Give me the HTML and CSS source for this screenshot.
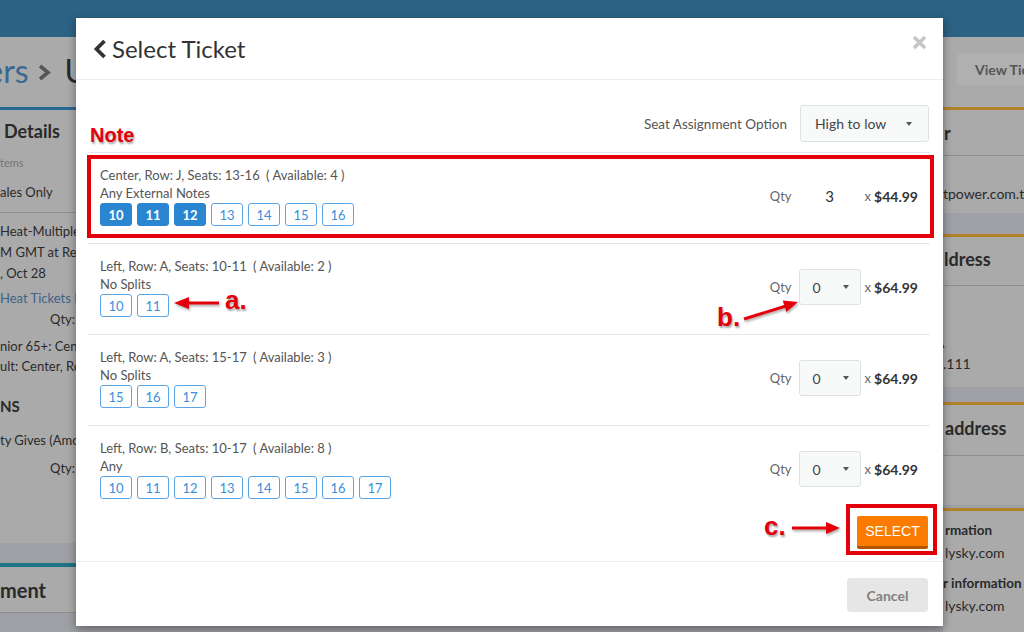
FILE: index.html
```html
<!DOCTYPE html>
<html>
<head>
  <title>Select Ticket</title>
  <link rel="stylesheet" href="styles.css">
</head>
<body>
  <div id="page">
    <div class="topbar"></div>

    <div class="page-head">
      <div class="crumbs">
        <span class="crumb-link">Orders</span>
        <svg class="crumb-sep" width="13" height="17" viewBox="0 0 13 17"><polyline points="2,2 10,8.5 2,15" fill="none" stroke="#7a7a7a" stroke-width="3.6"/></svg>
        <span class="crumb-current">Update Order</span>
      </div>
      <button class="btn-view">View Tickets</button>
    </div>

    <div class="columns">
      <div class="col-left">
        <div class="panel panel-order">
          <h3 class="panel-title">Details</h3>
          <div class="muted">tems</div>
          <div class="plain">ales Only</div>
          <div class="divider"></div>
          <div class="event">
            <div>Heat-Multiple Events</div>
            <div>M GMT at Regions Arena</div>
            <div>, Oct 28</div>
          </div>
          <div class="event-link">Heat Tickets For Sale</div>
          <div class="qty-line">Qty: 2</div>
          <div class="tix">
            <div>nior 65+: Center, Row J</div>
            <div>ult: Center, Row J</div>
          </div>
          <div class="sub-title">NS</div>
          <div class="plain gives">ty Gives (Amount)</div>
          <div class="qty-line qty-last">Qty: 1</div>
        </div>
        <div class="panel panel-pay">
          <h3 class="panel-title">ment</h3>
        </div>
      </div>

      <div class="col-right">
        <div class="panel panel-side side-a">
          <h3 class="side-title">r</h3>
          <div class="side-body">
            <div class="side-text first">tpower.com.tw</div>
          </div>
        </div>
        <div class="panel panel-side side-b">
          <h3 class="side-title">ldress</h3>
          <div class="side-body">
            <div class="side-text usa">A</div>
            <div class="side-text">.111</div>
          </div>
        </div>
        <div class="panel panel-side side-c">
          <h3 class="side-title">address</h3>
        </div>
        <div class="panel panel-side side-d">
          <div class="side-strong">rmation</div>
          <div class="side-text">lysky.com</div>
          <div class="side-strong second">r information</div>
          <div class="side-text">lysky.com</div>
        </div>
      </div>
    </div>
  </div>

  <div class="backdrop"></div>

  <div class="modal">
    <div class="modal-header">
      <h4 class="modal-title">
        <svg class="back-icon" width="14" height="20" viewBox="0 0 14 20"><polyline points="11.5,2 3.5,10 11.5,18" fill="none" stroke="#333" stroke-width="3.8"/></svg>
        <span>Select Ticket</span>
      </h4>
      <svg class="close-icon" width="15" height="15" viewBox="0 0 15 15"><path d="M2 2 L13 13 M13 2 L2 13" stroke="#c6c6c6" stroke-width="3.6"/></svg>
    </div>

    <div class="modal-body">
      <div class="toolbar">
        <span class="toolbar-label">Seat Assignment Option</span>
        <div class="dropdown wide"><span>High to low</span><i class="caret"></i></div>
      </div>

      <div class="rows">
        <div class="row">
          <div class="info">
            <div class="row-title">Center, Row: J, Seats: 13-16 <span class="avail">( Available: 4 )</span></div>
            <div class="row-note">Any External Notes</div>
            <div class="seats">
              <span class="seat on">10</span><span class="seat on">11</span><span class="seat on">12</span><span class="seat">13</span><span class="seat">14</span><span class="seat">15</span><span class="seat">16</span>
            </div>
          </div>
          <div class="qty">
            <span class="qty-label">Qty</span>
            <span class="qty-value">3</span>
            <span class="times">x</span><span class="price">$44.99</span>
          </div>
        </div>

        <div class="row">
          <div class="info">
            <div class="row-title">Left, Row: A, Seats: 10-11 <span class="avail">( Available: 2 )</span></div>
            <div class="row-note">No Splits</div>
            <div class="seats">
              <span class="seat">10</span><span class="seat">11</span>
            </div>
          </div>
          <div class="qty">
            <span class="qty-label">Qty</span>
            <div class="dropdown small"><span>0</span><i class="caret"></i></div>
            <span class="times">x</span><span class="price">$64.99</span>
          </div>
        </div>

        <div class="row">
          <div class="info">
            <div class="row-title">Left, Row: A, Seats: 15-17 <span class="avail">( Available: 3 )</span></div>
            <div class="row-note">No Splits</div>
            <div class="seats">
              <span class="seat">15</span><span class="seat">16</span><span class="seat">17</span>
            </div>
          </div>
          <div class="qty">
            <span class="qty-label">Qty</span>
            <div class="dropdown small"><span>0</span><i class="caret"></i></div>
            <span class="times">x</span><span class="price">$64.99</span>
          </div>
        </div>

        <div class="row">
          <div class="info">
            <div class="row-title">Left, Row: B, Seats: 10-17 <span class="avail">( Available: 8 )</span></div>
            <div class="row-note">Any</div>
            <div class="seats">
              <span class="seat">10</span><span class="seat">11</span><span class="seat">12</span><span class="seat">13</span><span class="seat">14</span><span class="seat">15</span><span class="seat">16</span><span class="seat">17</span>
            </div>
          </div>
          <div class="qty">
            <span class="qty-label">Qty</span>
            <div class="dropdown small"><span>0</span><i class="caret"></i></div>
            <span class="times">x</span><span class="price">$64.99</span>
          </div>
        </div>
      </div>

      <div class="actions">
        <button class="btn-select">SELECT</button>
      </div>
    </div>

    <div class="modal-footer">
      <button class="btn-cancel">Cancel</button>
    </div>
  </div>

  <!-- annotations drawn over the screenshot -->
  <div class="mark note-label">Note</div>
  <div class="mark-box box-row"></div>
  <div class="mark-box box-select"></div>
  <div class="mark letter letter-a">a.</div>
  <div class="mark letter letter-b">b.</div>
  <div class="mark letter letter-c">c.</div>
  <svg class="arrows" width="1024" height="632" viewBox="0 0 1024 632">
    <g fill="#e3000b" stroke="#e3000b">
      <line x1="219" y1="303" x2="186" y2="303" stroke-width="3"/>
      <polygon points="174,303 189,297 189,309" stroke="none"/>
      <line x1="744" y1="319" x2="786" y2="306" stroke-width="3"/>
      <polygon points="798,302 786.4,311.9 782.8,300.5" stroke="none"/>
      <line x1="792" y1="528" x2="828" y2="528" stroke-width="3"/>
      <polygon points="840,528 826,522 826,534" stroke="none"/>
    </g>
  </svg>
</body>
</html>
```

FILE: styles.css
```css
body {
  margin: 0;
  width: 1024px;
  height: 632px;
  overflow: hidden;
  position: relative;
  font-family: Lato, "Open Sans", Arial, sans-serif;
  background-color: #e3e6ec;
  color: #3c3c3c;
}
h3, h4 {
  margin: 0;
}
button {
  font-family: inherit;
  border: none;
  cursor: pointer;
}

/* page behind the modal */
.topbar {
  height: 37px;
  background-color: #3f8dbe;
}
.page-head {
  height: 70px;
  display: flex;
  align-items: center;
  justify-content: space-between;
  background-color: #f4f4f4;
  overflow: hidden;
}
.crumbs {
  display: flex;
  align-items: center;
  margin-left: -68px;
  margin-top: -4px;
  font-size: 32px;
  white-space: nowrap;
}
.crumb-link {
  color: #5296d2;
}
.crumb-sep {
  margin: 4px 14px 0 9px;
}
.crumb-current {
  color: #3c3c3c;
}
.btn-view {
  width: 90px;
  height: 31px;
  margin-right: -23px;
  margin-top: -6px;
  padding-left: 18px;
  text-align: left;
  font-size: 14px;
  font-weight: bold;
  color: #7a7a7a;
  background-color: #fdfdfd;
  border-radius: 3px;
  white-space: nowrap;
}
.columns {
  display: flex;
  justify-content: space-between;
}
.col-left {
  width: 300px;
}
.col-right {
  width: 81px;
}
.panel {
  background-color: #f4f4f4;
  box-sizing: border-box;
  white-space: nowrap;
}
.panel-order {
  height: 436px;
  border-top: 3px solid #3d95d4;
  font-size: 13px;
}
.panel-title {
  padding: 9px 0 7px 4px;
  font-size: 18px;
  line-height: 24px;
  color: #3c3c3c;
}
.muted {
  margin-top: 5px;
  font-size: 11px;
  line-height: 16px;
  color: #a8a8a8;
}
.plain {
  margin-top: 10px;
  line-height: 22px;
}
.divider {
  margin-top: 9px;
  border-top: 1px solid #cbcbcb;
}
.event {
  margin-top: 8px;
  line-height: 21px;
}
.event-link {
  margin-top: 4px;
  line-height: 21px;
  color: #5a8fc4;
}
.qty-line {
  padding-left: 50px;
  line-height: 20px;
}
.tix {
  margin-top: 7px;
  line-height: 20px;
}
.sub-title {
  margin-top: 18px;
  font-size: 15px;
  font-weight: bold;
  line-height: 24px;
}
.gives {
  margin-top: 12px;
  line-height: 20px;
}
.qty-last {
  margin-top: 8px;
}
.panel-pay {
  margin-top: 20px;
  height: 50px;
  border-top: 4px solid #2aa6bd;
  border-bottom: 1px solid #cbcbcb;
}
.panel-pay .panel-title {
  padding: 11px 0 0 0;
  font-size: 20px;
}

.panel-side {
  border-top: 3px solid #ffbb3c;
}
.side-title {
  padding: 11px 0 10px 1px;
  font-size: 18px;
  line-height: 24px;
  border-bottom: 1px solid #cbcbcb;
}
.side-text {
  font-size: 14px;
  line-height: 22px;
}
.side-a {
  height: 106px;
}
.side-a .side-text.first {
  padding-top: 27px;
}
.side-b {
  margin-top: 21px;
  height: 153px;
}
.side-b .side-title {
  padding: 10px 0 14px 1px;
}
.usa {
  margin: 47px 0 0 -8px;
  line-height: 20px;
}
.side-c {
  margin-top: 15px;
  height: 103px;
}
.side-c .side-title {
  padding: 11px 0 15px 2px;
}
.side-d {
  margin-top: 3px;
  height: 130px;
  padding-top: 8px;
}
.side-strong {
  font-size: 13.5px;
  font-weight: bold;
  line-height: 22px;
  padding-left: 2px;
}
.side-strong.second {
  margin-top: 8px;
  padding-left: 0;
}
.side-d .side-text {
  padding-left: 2px;
  margin-top: 1px;
}

.backdrop {
  position: absolute;
  inset: 0;
  background-color: rgba(0, 0, 0, 0.3);
}

/* modal */
.modal {
  position: absolute;
  left: 76px;
  top: 18px;
  width: 867px;
  background-color: #fff;
  box-shadow: 0 3px 9px rgba(0, 0, 0, 0.4);
}
.modal-header {
  height: 62px;
  box-sizing: border-box;
  padding: 0 16px 0 17px;
  display: flex;
  align-items: center;
  justify-content: space-between;
  border-bottom: 1px solid #ebebeb;
}
.modal-title {
  display: flex;
  align-items: center;
  font-size: 24px;
  font-weight: normal;
  color: #333;
}
.back-icon {
  margin-right: 5px;
}
.close-icon {
  align-self: flex-start;
  margin-top: 17px;
}
.modal-body {
  padding: 0 13px 0 12px;
}
.toolbar {
  display: flex;
  justify-content: flex-end;
  align-items: center;
  padding: 25px 1px 10px 0;
}
.toolbar-label {
  font-size: 13.5px;
  color: #555;
  margin-right: 13px;
}
.dropdown {
  display: flex;
  align-items: center;
  justify-content: space-between;
  box-sizing: border-box;
  background-color: #f8fafa;
  border: 1px solid #dfe2e2;
  border-radius: 3px;
  font-size: 14px;
  color: #444;
}
.dropdown.wide {
  width: 129px;
  height: 37px;
  padding: 0 16px 0 14px;
}
.dropdown.small {
  width: 62px;
  height: 36px;
  padding: 0 11px 0 13px;
}
.caret {
  width: 0;
  height: 0;
  border-top: 4px solid #555;
  border-left: 3.5px solid transparent;
  border-right: 3.5px solid transparent;
}
.rows {
  border-top: 1px solid #e6e6e6;
}
.row {
  display: flex;
  justify-content: space-between;
  align-items: center;
  padding: 13px 12px 17px;
  border-bottom: 1px solid #e6e6e6;
}
.row:last-child {
  border-bottom: none;
}
.row-title,
.row-note {
  font-size: 13px;
  line-height: 18px;
  color: #555;
}
.avail {
  margin-left: 3px;
}
.seats {
  display: flex;
  margin-top: 1px;
}
.seat {
  width: 32px;
  height: 23px;
  box-sizing: border-box;
  margin-right: 5px;
  display: flex;
  align-items: center;
  justify-content: center;
  border: 1px solid #5aa5e6;
  border-radius: 3px;
  font-size: 13px;
  color: #3b8fd9;
  background-color: #fff;
}
.seat.on {
  background-color: #2a86d1;
  border-color: #2a86d1;
  color: #fff;
  font-weight: bold;
}
.qty {
  display: flex;
  align-items: center;
}
.qty-label {
  font-size: 13px;
  color: #666;
  margin-right: 7px;
}
.qty-value {
  width: 62px;
  text-align: center;
  font-size: 15px;
  color: #333;
}
.times {
  font-size: 13px;
  color: #666;
  margin: 0 3px 0 4px;
}
.price {
  font-size: 14px;
  font-weight: bold;
  color: #333;
}
.actions {
  display: flex;
  justify-content: flex-end;
  padding: 0 2px 12px 0;
}
.btn-select {
  width: 71px;
  height: 33px;
  box-sizing: border-box;
  background-color: #fb7a00;
  border-bottom: 3px solid #b35400;
  border-radius: 2px;
  color: #fff;
  font-family: "Liberation Sans", Arial, sans-serif;
  font-size: 14px;
  padding: 0;
}
.modal-footer {
  display: flex;
  justify-content: flex-end;
  padding: 16px 15px 14px;
  border-top: 1px solid #ededed;
}
.btn-cancel {
  width: 81px;
  height: 34px;
  background-color: #e6e6e6;
  border-radius: 4px;
  color: #808080;
  font-size: 14px;
  font-weight: bold;
}

/* red annotations */
.mark {
  position: absolute;
  font-family: "Liberation Sans", Arial, sans-serif;
  font-weight: bold;
  color: #e3000b;
  text-shadow: 1px 2px 2px rgba(0, 0, 0, 0.35);
}
.note-label {
  left: 90px;
  top: 125px;
  font-size: 20px;
  line-height: 20px;
}
.letter {
  font-size: 26px;
  line-height: 26px;
}
.letter-a {
  left: 225px;
  top: 287px;
}
.letter-b {
  left: 717px;
  top: 304px;
}
.letter-c {
  left: 764px;
  top: 513px;
}
.mark-box {
  position: absolute;
  box-sizing: border-box;
  border: 4px solid #e3000b;
}
.box-row {
  left: 87px;
  top: 155px;
  width: 847px;
  height: 83px;
}
.box-select {
  left: 846px;
  top: 504px;
  width: 91px;
  height: 51px;
}
.arrows {
  position: absolute;
  left: 0;
  top: 0;
  filter: drop-shadow(1px 2px 1px rgba(0, 0, 0, 0.3));
}
```
